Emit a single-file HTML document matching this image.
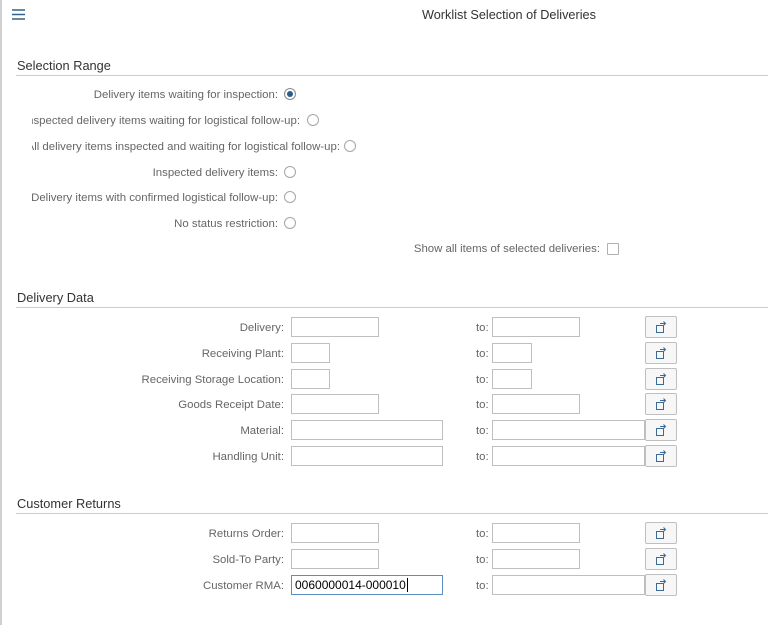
<!DOCTYPE html>
<html><head><meta charset="utf-8"><style>
body{margin:0;width:768px;height:625px;background:#fff;font-family:"Liberation Sans",Arial,sans-serif;position:relative;overflow:hidden;color:#666;font-size:11.4px}
.a{position:absolute}
.lb{position:absolute;white-space:nowrap;text-align:right;line-height:14px}
.clip{position:absolute;left:32px;overflow:hidden;height:16px}
.clip span{position:absolute;right:0;top:1px;white-space:nowrap;line-height:14px}
.rd{position:absolute;width:10px;height:10px;border:1px solid #a6a6a6;border-radius:50%;background:#fff}
.ttl{position:absolute;left:17px;font-size:12.8px;color:#333}
.ln{position:absolute;left:16px;right:0;height:1px;background:#ccc}
.in{position:absolute;height:18px;border:1px solid #bfbfbf;background:#fff}
.bt{position:absolute;left:645px;width:30px;height:20px;border:1px solid #bfbfbf;border-radius:2px;background:#f7f7f7}
.to{position:absolute;left:476px;line-height:14px;margin-top:1px}
</style></head><body>
<div class="a" style="left:0;top:0;width:2px;height:625px;background:#d0d0d0"></div>
<svg class="a" style="left:12px;top:9px" width="14" height="11"><path d="M0 1h13M0 5.5h13M0 10h13" stroke="#346187" stroke-width="1.6"/></svg>
<div class="a" style="left:422px;top:8px;font-size:12.7px;color:#333">Worklist Selection of Deliveries</div>

<div class="ttl" style="top:58px">Selection Range</div><div class="ln" style="top:75px"></div>
<div class="clip" style="top:87px;width:246px"><span>Delivery items waiting for inspection:</span></div><div class="rd" style="left:284px;top:88px;border-color:#8a8a8a"><div class="a" style="left:2px;top:2px;width:6px;height:6px;border-radius:50%;background:#2b5c8c"></div></div>
<div class="clip" style="top:113px;width:268px"><span>Inspected delivery items waiting for logistical follow-up:</span></div><div class="rd" style="left:307px;top:114px"></div>
<div class="clip" style="top:139px;width:308px"><span>All delivery items inspected and waiting for logistical follow-up:</span></div><div class="rd" style="left:344px;top:140px"></div>
<div class="clip" style="top:165px;width:246px"><span>Inspected delivery items:</span></div><div class="rd" style="left:284px;top:166px"></div>
<div class="clip" style="top:190px;width:246px"><span>Delivery items with confirmed logistical follow-up:</span></div><div class="rd" style="left:284px;top:191px"></div>
<div class="clip" style="top:216px;width:246px"><span>No status restriction:</span></div><div class="rd" style="left:284px;top:217px"></div>
<div class="lb" style="right:168px;top:242px">Show all items of selected deliveries:</div>
<div class="a" style="left:607px;top:243px;width:10px;height:10px;border:1px solid #b0b0b0;border-radius:1px"></div>

<div class="ttl" style="top:290px">Delivery Data</div><div class="ln" style="top:307px"></div>
<div class="ttl" style="top:496px">Customer Returns</div><div class="ln" style="top:513px"></div>

<div class="lb" style="right:484px;top:321px">Delivery:</div><div class="in" style="left:291px;top:317px;width:86px"></div><div class="to" style="top:320px">to:</div><div class="in" style="left:492px;top:317px;width:86px"></div><div class="bt" style="top:316px"><svg width="30" height="20"><path d="M10.5 8.5h7v7h-7z" fill="none" stroke="#3a6a96"/><path d="M14 6.5h5.5M17.5 4.5l2 2-2 2" fill="none" stroke="#3a6a96"/></svg></div>
<div class="lb" style="right:484px;top:347px">Receiving Plant:</div><div class="in" style="left:291px;top:343px;width:37px"></div><div class="to" style="top:346px">to:</div><div class="in" style="left:492px;top:343px;width:38px"></div><div class="bt" style="top:342px"><svg width="30" height="20"><path d="M10.5 8.5h7v7h-7z" fill="none" stroke="#3a6a96"/><path d="M14 6.5h5.5M17.5 4.5l2 2-2 2" fill="none" stroke="#3a6a96"/></svg></div>
<div class="lb" style="right:484px;top:373px">Receiving Storage Location:</div><div class="in" style="left:291px;top:369px;width:37px"></div><div class="to" style="top:372px">to:</div><div class="in" style="left:492px;top:369px;width:38px"></div><div class="bt" style="top:368px"><svg width="30" height="20"><path d="M10.5 8.5h7v7h-7z" fill="none" stroke="#3a6a96"/><path d="M14 6.5h5.5M17.5 4.5l2 2-2 2" fill="none" stroke="#3a6a96"/></svg></div>
<div class="lb" style="right:484px;top:398px">Goods Receipt Date:</div><div class="in" style="left:291px;top:394px;width:86px"></div><div class="to" style="top:397px">to:</div><div class="in" style="left:492px;top:394px;width:86px"></div><div class="bt" style="top:393px"><svg width="30" height="20"><path d="M10.5 8.5h7v7h-7z" fill="none" stroke="#3a6a96"/><path d="M14 6.5h5.5M17.5 4.5l2 2-2 2" fill="none" stroke="#3a6a96"/></svg></div>
<div class="lb" style="right:484px;top:424px">Material:</div><div class="in" style="left:291px;top:420px;width:150px"></div><div class="to" style="top:423px">to:</div><div class="in" style="left:492px;top:420px;width:151px"></div><div class="bt" style="top:419px"><svg width="30" height="20"><path d="M10.5 8.5h7v7h-7z" fill="none" stroke="#3a6a96"/><path d="M14 6.5h5.5M17.5 4.5l2 2-2 2" fill="none" stroke="#3a6a96"/></svg></div>
<div class="lb" style="right:484px;top:450px">Handling Unit:</div><div class="in" style="left:291px;top:446px;width:150px"></div><div class="to" style="top:449px">to:</div><div class="in" style="left:492px;top:446px;width:151px"></div><div class="bt" style="top:445px"><svg width="30" height="20"><path d="M10.5 8.5h7v7h-7z" fill="none" stroke="#3a6a96"/><path d="M14 6.5h5.5M17.5 4.5l2 2-2 2" fill="none" stroke="#3a6a96"/></svg></div>

<div class="lb" style="right:484px;top:527px">Returns Order:</div><div class="in" style="left:291px;top:523px;width:86px"></div><div class="to" style="top:526px">to:</div><div class="in" style="left:492px;top:523px;width:86px"></div><div class="bt" style="top:522px"><svg width="30" height="20"><path d="M10.5 8.5h7v7h-7z" fill="none" stroke="#3a6a96"/><path d="M14 6.5h5.5M17.5 4.5l2 2-2 2" fill="none" stroke="#3a6a96"/></svg></div>
<div class="lb" style="right:484px;top:553px">Sold-To Party:</div><div class="in" style="left:291px;top:549px;width:86px"></div><div class="to" style="top:552px">to:</div><div class="in" style="left:492px;top:549px;width:86px"></div><div class="bt" style="top:548px"><svg width="30" height="20"><path d="M10.5 8.5h7v7h-7z" fill="none" stroke="#3a6a96"/><path d="M14 6.5h5.5M17.5 4.5l2 2-2 2" fill="none" stroke="#3a6a96"/></svg></div>
<div class="lb" style="right:484px;top:579px">Customer RMA:</div><div class="in" style="left:291px;top:575px;width:150px;border-color:#5b8fc4"><div class="a" style="left:3px;top:2px;font-size:12px;color:#000">0060000014-000010<span style="border-left:1px solid #000;margin-left:1px"></span></div></div><div class="to" style="top:578px">to:</div><div class="in" style="left:492px;top:575px;width:151px"></div><div class="bt" style="top:574px"><svg width="30" height="20"><path d="M10.5 8.5h7v7h-7z" fill="none" stroke="#3a6a96"/><path d="M14 6.5h5.5M17.5 4.5l2 2-2 2" fill="none" stroke="#3a6a96"/></svg></div>
</body></html>
